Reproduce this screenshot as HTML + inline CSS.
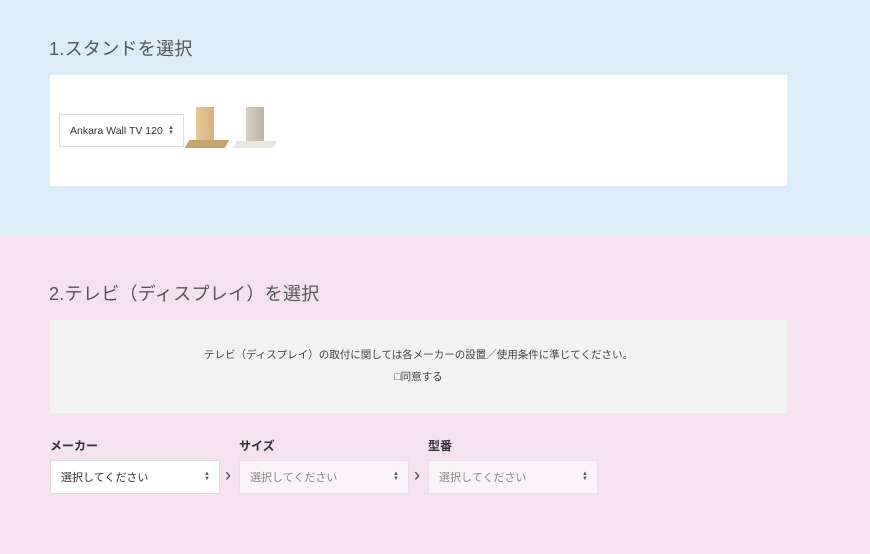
<!DOCTYPE html>
<html><head><meta charset="utf-8"><style>
*{box-sizing:border-box;margin:0;padding:0}
body{width:870px;height:554px;overflow:hidden;font-family:"Liberation Sans","Noto Sans CJK JP",sans-serif;color:#444}
.top{position:absolute;left:0;top:0;width:870px;height:236px;background:#ddedf8}
.bot{position:absolute;left:0;top:236px;width:870px;height:318px;background:#f4e3ee}
h2{position:absolute;left:49px;font-weight:normal;font-size:18px;color:#555;letter-spacing:0.3px}
.card{position:absolute;left:50px;top:75px;width:737px;height:111px;background:#fff}
.sel{position:absolute;border:1px solid #ddd;background:#fff;font-size:11px;color:#333}
.arr{position:absolute;right:9px;top:50%;transform:translateY(-50%);font-size:6px;line-height:5px;color:#555;text-align:center}
.note{position:absolute;left:50px;top:320px;width:737px;height:93px;background:#f2f2f2;font-size:10.5px;color:#444;text-align:center}
.lbl{position:absolute;top:437px;font-size:12px;font-weight:bold;color:#333}
.chev{position:absolute;top:465px;font-size:18px;color:#444}
</style></head><body>
<div class="top"></div><div class="bot"></div>
<h2 style="top:35px">1.スタンドを選択</h2>
<div class="card"></div>
<div class="sel" style="left:59px;top:114px;width:125px;height:33px;padding:10px 0 0 10px;font-size:10.5px">Ankara Wall TV 120<div class="arr">▲<br>▼</div></div>
<div style="position:absolute;left:196px;top:107px;width:18px;height:38px;background:linear-gradient(90deg,#e7c79a,#d9b07a)"></div>
<div style="position:absolute;left:187px;top:140px;width:40px;height:8px;background:#c9a26f;transform:skewX(-30deg)"></div>
<div style="position:absolute;left:246px;top:107px;width:18px;height:38px;background:linear-gradient(90deg,#d8cfc4,#bfb2a1)"></div>
<div style="position:absolute;left:235px;top:141px;width:40px;height:7px;background:#e9e6e1;transform:skewX(-30deg)"></div>
<h2 style="top:280px">2.テレビ（ディスプレイ）を選択</h2>
<div class="note"><div style="margin-top:27px">テレビ（ディスプレイ）の取付に関しては各メーカーの設置／使用条件に準じてください。</div><div style="margin-top:7px">□同意する</div></div>
<div class="lbl" style="left:50px">メーカー</div>
<div class="lbl" style="left:239px">サイズ</div>
<div class="lbl" style="left:428px">型番</div>
<div class="sel" style="left:50px;top:460px;width:170px;height:34px;padding:8px 0 0 10px">選択してください<div class="arr">▲<br>▼</div></div>
<div class="chev" style="left:225px">›</div>
<div class="sel" style="left:239px;top:460px;width:170px;height:34px;padding:8px 0 0 10px;background:#faf3f8;color:#888;border-color:#eadde6">選択してください<div class="arr">▲<br>▼</div></div>
<div class="chev" style="left:414px">›</div>
<div class="sel" style="left:428px;top:460px;width:170px;height:34px;padding:8px 0 0 10px;background:#faf3f8;color:#888;border-color:#eadde6">選択してください<div class="arr">▲<br>▼</div></div>
</body></html>
